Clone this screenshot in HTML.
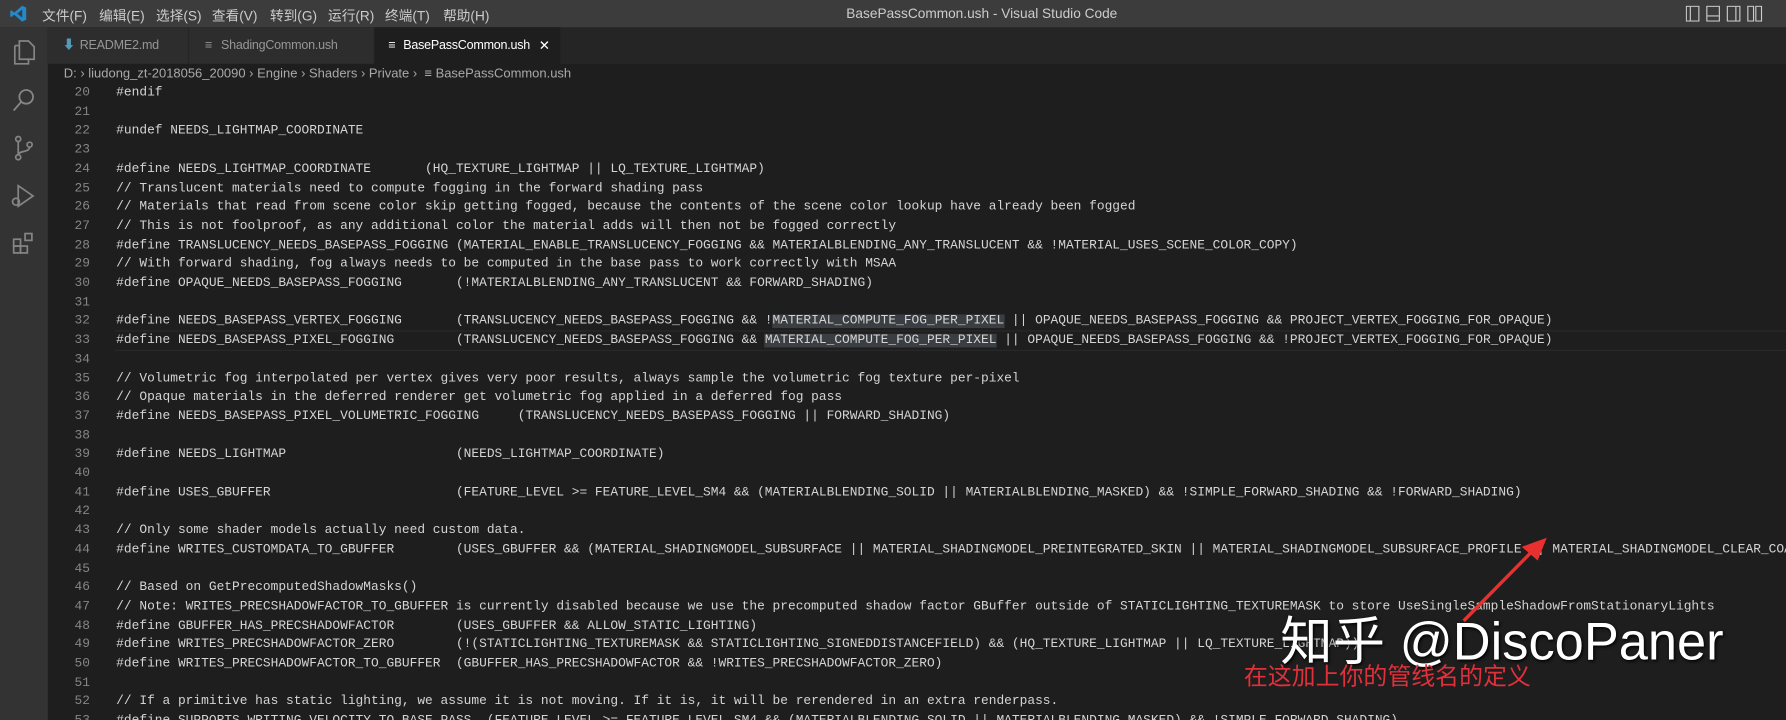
<!DOCTYPE html>
<html><head><meta charset="utf-8"><style>
html,body{margin:0;padding:0;width:1786px;height:720px;overflow:hidden;background:#1e1e1e}
#w{position:absolute;left:0;top:0;width:1568px;height:632px;transform:scale(1.13903,1.13924);transform-origin:0 0;background:#1e1e1e;font-family:"Liberation Sans","Noto Sans CJK SC",sans-serif;overflow:hidden}
.title{position:absolute;left:0;top:0;width:1568px;height:24px;background:#3c3c3c;color:#cccccc;font-size:12px}
.menu span{position:absolute;top:5px}
.act{position:absolute;left:0;top:24px;width:42px;height:608px;background:#333333}
.tabs{position:absolute;left:42px;top:24px;width:1526px;height:32px;background:#252526}
.tab{position:absolute;top:0;height:32px;background:#2d2d2d;color:#969696;font-size:11px;letter-spacing:-0.2px;line-height:33px}
.bc{position:absolute;left:42px;top:56px;width:1526px;height:18px;color:#a9a9a9;font-size:11.4px;line-height:18px}
.code{position:absolute;left:42px;top:74px;width:1526px;font-family:"Liberation Mono",monospace;font-size:11.3px;color:#d4d4d4}
.ln{position:absolute;left:0;width:37px;text-align:right;color:#858585}
.tx{position:absolute;left:60px;white-space:pre}
.hl{background:#3a3d41;font-weight:normal}
</style></head><body><div id="w">
<div class="title">
<svg style="position:absolute;left:8px;top:4px" width="16" height="16" viewBox="0 0 16 16"><path d="M11.5 1 L15 2.7 V13.3 L11.5 15 L4.5 9 L1.8 11 L1 10.4 V5.6 L1.8 5 L4.5 7 Z M11.5 4.5 L7.2 8 L11.5 11.5 Z" fill="#2489ca"/></svg>
<div class="menu"><span style="left:37px">文件(F)</span><span style="left:87px">编辑(E)</span><span style="left:137px">选择(S)</span><span style="left:186px">查看(V)</span><span style="left:237px">转到(G)</span><span style="left:288px">运行(R)</span><span style="left:338px">终端(T)</span><span style="left:389px">帮助(H)</span></div>
<span style="position:absolute;left:743px;top:5px">BasePassCommon.ush - Visual Studio Code</span>
<svg style="position:absolute;left:1480px;top:5px" width="80" height="14"><g fill="none" stroke="#ccc" stroke-width="1"><rect x="0.5" y="0.5" width="11" height="13"/><line x1="4" y1="1" x2="4" y2="13"/><rect x="18.5" y="0.5" width="11" height="13"/><line x1="19" y1="9" x2="29" y2="9"/><rect x="36.5" y="0.5" width="11" height="13"/><line x1="44" y1="1" x2="44" y2="13"/><rect x="54.5" y="0.5" width="5" height="13"/><rect x="61.5" y="0.5" width="5" height="13"/></g></svg>
</div>
<div class="act">
<svg style="position:absolute;left:9px;top:10px" width="24" height="24" viewBox="0 0 24 24" fill="none" stroke="#858585" stroke-width="1.5"><path d="M8 2h8l5 5v11H8z M4 6h4 M4 6v16h12v-4"/></svg>
<svg style="position:absolute;left:9px;top:52px" width="24" height="24" viewBox="0 0 24 24" fill="none" stroke="#858585" stroke-width="1.6"><circle cx="14" cy="9" r="6"/><path d="M10 13 L3 21"/></svg>
<svg style="position:absolute;left:9px;top:94px" width="24" height="24" viewBox="0 0 24 24" fill="none" stroke="#858585" stroke-width="1.5"><circle cx="7" cy="4" r="2.2"/><circle cx="7" cy="20" r="2.2"/><circle cx="17" cy="9" r="2.2"/><path d="M7 6v12 M17 11c0 5-10 3-10 7"/></svg>
<svg style="position:absolute;left:9px;top:136px" width="24" height="24" viewBox="0 0 24 24" fill="none" stroke="#858585" stroke-width="1.5"><path d="M7 3l13 9-13 9z"/><circle cx="5" cy="17" r="3"/></svg>
<svg style="position:absolute;left:9px;top:178px" width="24" height="24" viewBox="0 0 24 24" fill="none" stroke="#858585" stroke-width="1.5"><rect x="3" y="8" width="6" height="6"/><rect x="3" y="14" width="6" height="6"/><rect x="9" y="14" width="6" height="6"/><rect x="13" y="3" width="6" height="6"/></svg>
</div>
<div class="tabs">
<div class="tab" style="left:0;width:123px"><span style="color:#519aba;position:absolute;left:13px;font-size:11px">&#x2B07;</span><span style="position:absolute;left:28px">README2.md</span></div>
<div class="tab" style="left:124px;width:162px"><span style="position:absolute;left:14px">&#x2261;</span><span style="position:absolute;left:28px">ShadingCommon.ush</span></div>
<div class="tab" style="left:287px;width:163px;background:#1e1e1e;color:#fff"><span style="position:absolute;left:12px">&#x2261;</span><span style="position:absolute;left:25px">BasePassCommon.ush</span><span style="position:absolute;left:144px;font-size:12px">✕</span></div>
</div>
<div class="bc"><span style="position:absolute;left:14px">D: &#x203A; liudong_zt-2018056_20090 &#x203A; Engine &#x203A; Shaders &#x203A; Private &#x203A; &nbsp;≡ BasePassCommon.ush</span></div>
<div class="code" id="c"></div>
<div style="position:absolute;left:101px;top:290px;width:1467px;height:16px;border-top:1px solid #2a2a2a;border-bottom:1px solid #2a2a2a"></div>
<svg style="position:absolute;left:0;top:0" width="1568" height="632"><path d="M1285 545 L1346 483" stroke="#e8302f" stroke-width="3"/><path d="M1358 472 L1336 480 L1350 492 Z" fill="#e8302f"/></svg>
<div style="position:absolute;left:1124px;top:535px;color:#fff;font-size:46px;line-height:56px;white-space:nowrap;text-shadow:1px 1px 3px #000;font-family:'Liberation Sans','Noto Sans CJK SC',sans-serif">知乎 @DiscoPaner</div>
<div style="position:absolute;left:1092px;top:580px;color:#e0303a;font-size:21px;line-height:26px;white-space:nowrap;font-family:'Noto Sans CJK SC',sans-serif">在这加上你的管线名的定义</div>
</div>
<script>
var L=[
"#endif","","#undef NEEDS_LIGHTMAP_COORDINATE","",
"#define NEEDS_LIGHTMAP_COORDINATE       (HQ_TEXTURE_LIGHTMAP || LQ_TEXTURE_LIGHTMAP)",
"// Translucent materials need to compute fogging in the forward shading pass",
"// Materials that read from scene color skip getting fogged, because the contents of the scene color lookup have already been fogged",
"// This is not foolproof, as any additional color the material adds will then not be fogged correctly",
"#define TRANSLUCENCY_NEEDS_BASEPASS_FOGGING (MATERIAL_ENABLE_TRANSLUCENCY_FOGGING && MATERIALBLENDING_ANY_TRANSLUCENT && !MATERIAL_USES_SCENE_COLOR_COPY)",
"// With forward shading, fog always needs to be computed in the base pass to work correctly with MSAA",
"#define OPAQUE_NEEDS_BASEPASS_FOGGING       (!MATERIALBLENDING_ANY_TRANSLUCENT && FORWARD_SHADING)",
"",
"#define NEEDS_BASEPASS_VERTEX_FOGGING       (TRANSLUCENCY_NEEDS_BASEPASS_FOGGING && !<b class=hl>MATERIAL_COMPUTE_FOG_PER_PIXEL</b> || OPAQUE_NEEDS_BASEPASS_FOGGING && PROJECT_VERTEX_FOGGING_FOR_OPAQUE)",
"#define NEEDS_BASEPASS_PIXEL_FOGGING        (TRANSLUCENCY_NEEDS_BASEPASS_FOGGING && <b class=hl>MATERIAL_COMPUTE_FOG_PER_PIXEL</b> || OPAQUE_NEEDS_BASEPASS_FOGGING && !PROJECT_VERTEX_FOGGING_FOR_OPAQUE)",
"",
"// Volumetric fog interpolated per vertex gives very poor results, always sample the volumetric fog texture per-pixel",
"// Opaque materials in the deferred renderer get volumetric fog applied in a deferred fog pass",
"#define NEEDS_BASEPASS_PIXEL_VOLUMETRIC_FOGGING     (TRANSLUCENCY_NEEDS_BASEPASS_FOGGING || FORWARD_SHADING)",
"",
"#define NEEDS_LIGHTMAP                      (NEEDS_LIGHTMAP_COORDINATE)",
"",
"#define USES_GBUFFER                        (FEATURE_LEVEL >= FEATURE_LEVEL_SM4 && (MATERIALBLENDING_SOLID || MATERIALBLENDING_MASKED) && !SIMPLE_FORWARD_SHADING && !FORWARD_SHADING)",
"",
"// Only some shader models actually need custom data.",
"#define WRITES_CUSTOMDATA_TO_GBUFFER        (USES_GBUFFER && (MATERIAL_SHADINGMODEL_SUBSURFACE || MATERIAL_SHADINGMODEL_PREINTEGRATED_SKIN || MATERIAL_SHADINGMODEL_SUBSURFACE_PROFILE || MATERIAL_SHADINGMODEL_CLEAR_COAT",
"",
"// Based on GetPrecomputedShadowMasks()",
"// Note: WRITES_PRECSHADOWFACTOR_TO_GBUFFER is currently disabled because we use the precomputed shadow factor GBuffer outside of STATICLIGHTING_TEXTUREMASK to store UseSingleSampleShadowFromStationaryLights",
"#define GBUFFER_HAS_PRECSHADOWFACTOR        (USES_GBUFFER && ALLOW_STATIC_LIGHTING)",
"#define WRITES_PRECSHADOWFACTOR_ZERO        (!(STATICLIGHTING_TEXTUREMASK && STATICLIGHTING_SIGNEDDISTANCEFIELD) && (HQ_TEXTURE_LIGHTMAP || LQ_TEXTURE_LIGHTMAP))",
"#define WRITES_PRECSHADOWFACTOR_TO_GBUFFER  (GBUFFER_HAS_PRECSHADOWFACTOR && !WRITES_PRECSHADOWFACTOR_ZERO)",
"",
"// If a primitive has static lighting, we assume it is not moving. If it is, it will be rerendered in an extra renderpass.",
"#define SUPPORTS_WRITING_VELOCITY_TO_BASE_PASS  (FEATURE_LEVEL >= FEATURE_LEVEL_SM4 && (MATERIALBLENDING_SOLID || MATERIALBLENDING_MASKED) && !SIMPLE_FORWARD_SHADING)"
];
var h="";for(var i=0;i<L.length;i++){var y=i*16.7+2;h+='<div class="ln" style="top:'+y+'px">'+(20+i)+'</div><div class="tx" style="top:'+y+'px">'+L[i].replace(/&&/g,"&amp;&amp;").replace(/>=/g,"&gt;=")+'</div>';}
document.getElementById("c").innerHTML=h;
</script>
</body></html>
